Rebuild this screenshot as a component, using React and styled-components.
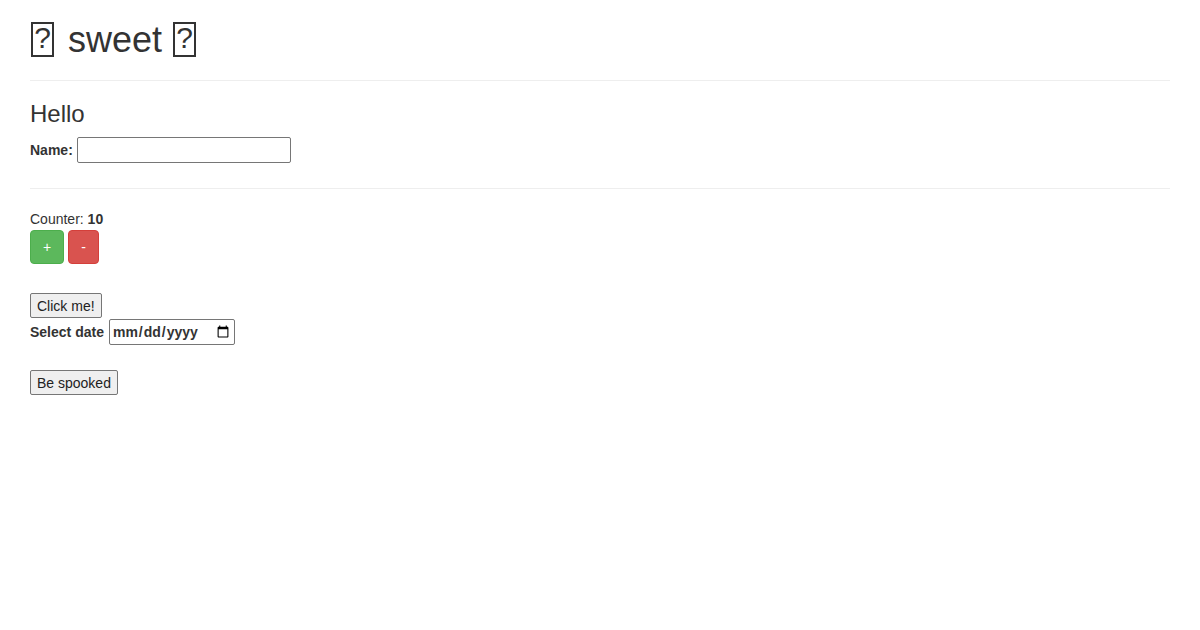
import React, {useState} from 'react';
import styled, {createGlobalStyle} from 'styled-components';

const GlobalStyle = createGlobalStyle`
  html, body {
    margin: 0;
    padding: 0;
    background: #fff;
  }
  body {
    font-family: "Liberation Sans", Helvetica, Arial, sans-serif;
    font-size: 14px;
    line-height: 20px;
    color: #333;
  }
  button, input {
    font: inherit;
    color: inherit;
    margin: 0;
  }
`;

const Container = styled.div`
  padding: 0 30px;
  display: flex;
  flex-direction: column;
  align-items: flex-start;
`;

const Title = styled.h1`
  display: flex;
  align-items: center;
  height: 39.6px;
  font-size: 36px;
  font-weight: 500;
  line-height: 39.6px;
  margin: 20px 0 0;
`;

const TitleWord = styled.span`
  margin: 0 10px 0 14px;
`;

// missing-glyph box, the way the emoji shows up without an emoji font
const Tofu = styled.span`
  display: flex;
  align-items: center;
  justify-content: center;
  box-sizing: border-box;
  width: 23px;
  height: 35px;
  margin-left: 1px;
  border: 2px solid #333;
  font-family: "Liberation Sans Narrow", "Liberation Sans", sans-serif;
  font-size: 30px;
  line-height: 1;
  padding-bottom: 3px;
`;

const Rule = styled.hr`
  align-self: stretch;
  border: 0;
  border-top: 1px solid #eee;
  margin: ${props => props.$top || 20}px 0 20px;
`;

const Heading = styled.h3`
  font-size: 24px;
  font-weight: 500;
  line-height: 26.4px;
  margin: 0 0 10px;
`;

const FieldRow = styled.label`
  display: flex;
  align-items: center;
  gap: ${props => props.$gap || 4}px;
  font-weight: bold;
`;

const TextInput = styled.input`
  box-sizing: border-box;
  width: 214px;
  height: 26px;
  border: 1px solid #767676;
  border-radius: 2px;
  padding: 1px 2px;
  background: #fff;
`;

const DateInput = styled.input`
  box-sizing: border-box;
  width: 126px;
  height: 26px;
  border: 1px solid #767676;
  border-radius: 2px;
  padding: 1px 2px;
  background: #fff;
  font-weight: bold;
`;

const CounterLine = styled.div`
  line-height: 20px;
`;

const BtnGroup = styled.div`
  display: flex;
  gap: 4px;
  margin-top: 1px;
`;

const ColorBtn = styled.button`
  height: 34px;
  padding: 6px 12px;
  border: 1px solid ${props => (props.$variant === 'danger' ? '#d43f3a' : '#4cae4c')};
  background: ${props => (props.$variant === 'danger' ? '#d9534f' : '#5cb85c')};
  color: #fff;
  border-radius: 4px;
  line-height: 20px;
  cursor: pointer;
`;

const PlainBtn = styled.button`
  box-sizing: border-box;
  height: 25px;
  padding: 0 6px;
  border: 1px solid #767676;
  border-radius: 2px;
  background: #efefef;
  color: #222;
  line-height: 20px;
  margin-top: ${props => props.$top || 0}px;
  cursor: pointer;
`;

const DateRow = styled(FieldRow)`
  margin-top: 1px;
`;

export default function App() {
  const [count, setCount] = useState(10);
  const [name, setName] = useState('');

  return (
    <Container>
      <GlobalStyle />
      <Title>
        <Tofu>?</Tofu>
        <TitleWord>sweet</TitleWord>
        <Tofu>?</Tofu>
      </Title>
      <Rule />
      <Heading>Hello</Heading>
      <FieldRow>
        Name:
        <TextInput type="text" value={name} onChange={e => setName(e.target.value)} />
      </FieldRow>
      <Rule $top={25} />
      <CounterLine>
        Counter: <b>{count}</b>
      </CounterLine>
      <BtnGroup>
        <ColorBtn onClick={() => setCount(count + 1)}>+</ColorBtn>
        <ColorBtn $variant="danger" onClick={() => setCount(count - 1)}>-</ColorBtn>
      </BtnGroup>
      <PlainBtn $top={29}>Click me!</PlainBtn>
      <DateRow $gap={5}>
        Select date
        <DateInput type="date" />
      </DateRow>
      <PlainBtn $top={25}>Be spooked</PlainBtn>
    </Container>
  );
}
